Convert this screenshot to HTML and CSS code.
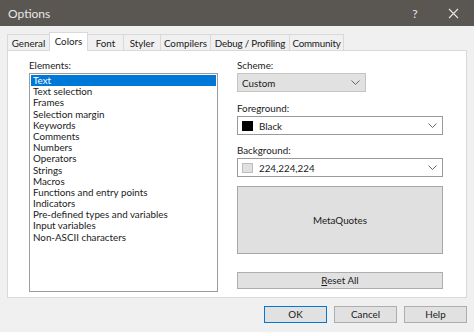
FILE: index.html
```html
<!DOCTYPE html>
<html lang="en">

<head>
    <meta charset="UTF-8">
    <title>Options</title>
    <link rel="stylesheet" href="styles.css">
</head>

<body>
    <div class="window">
        <div class="titlebar">
            <span class="title">Options</span>
            <span class="help">?</span>
            <span class="close">
                <svg width="11" height="11" viewBox="0 0 11 11"><path d="M1 1 L10 10 M10 1 L1 10" stroke="#e6e6e6" stroke-width="1.1" fill="none"/></svg>
            </span>
        </div>

        <div class="tabs">
            <div class="tab tab-general">General</div>
            <div class="tab tab-colors active">Colors</div>
            <div class="tab tab-font">Font</div>
            <div class="tab tab-styler">Styler</div>
            <div class="tab tab-compilers">Compilers</div>
            <div class="tab tab-debug">Debug / Profiling</div>
            <div class="tab tab-community">Community</div>
        </div>

        <div class="panel">
            <div class="col-left">
                <div class="label">Elements:</div>
                <div class="listbox">
                    <div class="item selected">Text</div>
                    <div class="item">Text selection</div>
                    <div class="item">Frames</div>
                    <div class="item">Selection margin</div>
                    <div class="item">Keywords</div>
                    <div class="item">Comments</div>
                    <div class="item">Numbers</div>
                    <div class="item">Operators</div>
                    <div class="item">Strings</div>
                    <div class="item">Macros</div>
                    <div class="item">Functions and entry points</div>
                    <div class="item">Indicators</div>
                    <div class="item">Pre-defined types and variables</div>
                    <div class="item">Input variables</div>
                    <div class="item">Non-ASCII characters</div>
                </div>
            </div>

            <div class="col-right">
                <div class="label">Scheme:</div>
                <div class="select scheme">
                    <span>Custom</span>
                    <svg class="arrow" width="9" height="5" viewBox="0 0 9 5"><path d="M0.5 0.5 L4.5 4.5 L8.5 0.5" stroke="#666" fill="none"/></svg>
                </div>

                <div class="label">Foreground:</div>
                <div class="select white">
                    <span class="swatch black"></span>
                    <span>Black</span>
                    <svg class="arrow" width="9" height="5" viewBox="0 0 9 5"><path d="M0.5 0.5 L4.5 4.5 L8.5 0.5" stroke="#666" fill="none"/></svg>
                </div>

                <div class="label">Background:</div>
                <div class="select white">
                    <span class="swatch grey"></span>
                    <span>224,224,224</span>
                    <svg class="arrow" width="9" height="5" viewBox="0 0 9 5"><path d="M0.5 0.5 L4.5 4.5 L8.5 0.5" stroke="#666" fill="none"/></svg>
                </div>

                <div class="preview">MetaQuotes</div>

                <div class="button reset"><u>R</u>eset All</div>
            </div>
        </div>

        <div class="footer">
            <div class="button ok">OK</div>
            <div class="button">Cancel</div>
            <div class="button">Help</div>
        </div>
    </div>
</body>
</html>
```

FILE: styles.css
```css
html,
body {
    margin: 0;
    padding: 0;
}

body {
    width: 474px;
    height: 332px;
    background-color: #f0f0f0;
    font-family: "Lato", "Liberation Sans", sans-serif;
    font-size: 9.8px;
    color: #1a1a1a;
    overflow: hidden;
}

.titlebar {
    height: 26px;
    background-color: #5a5651;
    display: flex;
    align-items: center;
    padding: 0 2px 0 8px;
    color: #e8e8e8;
}

.title {
    font-size: 12px;
    flex: 1;
}

.help {
    font-size: 12px;
    width: 38px;
    text-align: center;
}

.close {
    width: 38px;
    display: flex;
    justify-content: center;
}

.tabs {
    display: flex;
    align-items: flex-end;
    height: 19px;
    margin-top: 5px;
    padding-left: 7px;
}

.tab {
    box-sizing: border-box;
    height: 16px;
    line-height: 16px;
    text-align: center;
    white-space: nowrap;
    border: 1px solid #d9d9d9;
    border-bottom: none;
    margin-right: -1px;
    background-color: #f0f0f0;
}

.tab-general { width: 43px; }
.tab-colors { width: 39px; }
.tab-font { width: 37px; }
.tab-styler { width: 38px; }
.tab-compilers { width: 51px; }
.tab-debug { width: 80px; letter-spacing: -0.2px; }
.tab-community { width: 55px; letter-spacing: -0.2px; }

.tab.active {
    height: 19px;
    line-height: 17px;
    background-color: #fff;
    position: relative;
    z-index: 1;
    margin-bottom: -1px;
}

.panel {
    height: 238px;
    margin: 0 7px;
    background-color: #fff;
    border: 1px solid #d9d9d9;
    display: flex;
    padding: 8px 0 0 21px;
    gap: 19px;
}

.label {
    height: 13px;
    line-height: 13px;
    margin-bottom: 1px;
}

.col-left {
    width: 189px;
}

.listbox {
    height: 215px;
    border: 1px solid #9c9c9c;
    padding: 1px;
}

.item {
    height: 11.2px;
    line-height: 11px;
    padding-left: 2px;
    white-space: nowrap;
}

.item.selected {
    background-color: #0078d7;
    color: #fff;
}

.col-right {
    width: 206px;
}

.select {
    height: 17px;
    border: 1px solid #adadad;
    display: flex;
    align-items: center;
    padding: 0 5px 0 4px;
    margin-bottom: 9px;
    gap: 6px;
}

.select .arrow {
    margin-left: auto;
}

.select.scheme {
    width: 118px;
    background-color: #e1e1e1;
    border-color: #c4c4c4;
    margin-bottom: 10px;
}

.select.white {
    background-color: #fff;
    border-color: #9a9a9a;
}

.swatch {
    width: 11px;
    height: 10px;
    box-sizing: border-box;
}

.swatch.black {
    background-color: #000;
}

.swatch.grey {
    background-color: #e0e0e0;
    border: 1px solid #bcbcbc;
}

.preview {
    height: 66px;
    background-color: #e0e0e0;
    border: 1px solid #a8a8a8;
    display: flex;
    align-items: center;
    justify-content: center;
}

.button {
    height: 15px;
    line-height: 15px;
    text-align: center;
    background-color: #e1e1e1;
    border: 1px solid #adadad;
}

.button.reset {
    margin-top: 18px;
}

.footer {
    display: flex;
    justify-content: flex-end;
    gap: 7px;
    padding: 8px 7px 0 0;
}

.footer .button {
    width: 61px;
}

.footer .button.ok {
    border-color: #0078d7;
}
```
